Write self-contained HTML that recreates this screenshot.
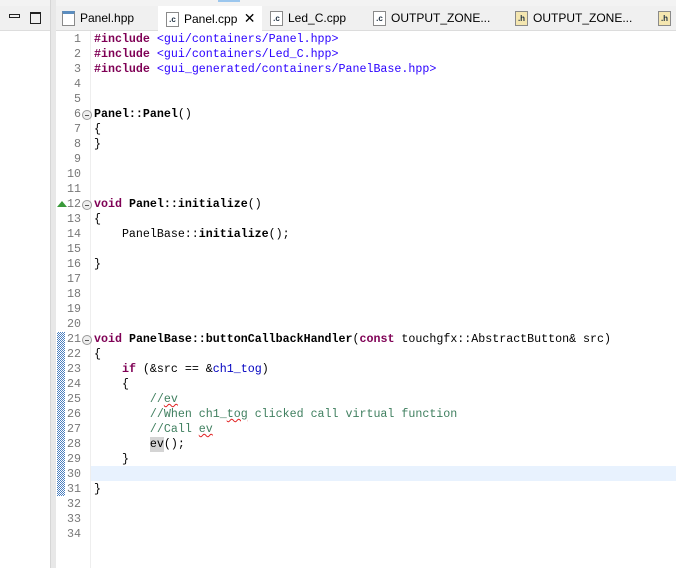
<!DOCTYPE html>
<html><head><style>
body{margin:0;width:676px;height:568px;overflow:hidden;background:#fff;font-family:"Liberation Sans",sans-serif;position:relative}
.a{position:absolute}
.code{font-family:"Liberation Mono",monospace;font-size:11.65px;white-space:pre;line-height:15px}
.ln{position:absolute;left:52px;width:29px;text-align:right;color:#787878;font-family:"Liberation Mono",monospace;font-size:11.65px;line-height:15px}
.cl{position:absolute;left:94px;color:#000}
.k{color:#7f0055;font-weight:bold}
.s{color:#2a00ff}
.c{color:#3f7f5f}
.b{font-weight:bold}
.tab{position:absolute;top:6px;height:24px;font-size:12px;line-height:24px;color:#000}
.ic{display:inline-block;width:11px;height:13px;border:1px solid #8a8a8a;background:#fff;font-size:8px;line-height:13px;text-align:center;vertical-align:middle;margin-right:5px;color:#234;font-weight:bold}
.fold{position:absolute;left:82px;width:8px;height:8px;border:1px solid #999;border-radius:50%;background:#eee}
.fold:after{content:"";position:absolute;left:2px;top:3.5px;width:4px;height:1px;background:#555}
.sq{text-decoration:underline wavy #e02020;text-decoration-thickness:1px}
</style></head><body>
<div class="a" style="left:0;top:0;width:676px;height:6px;background:#f3f3f3;border-bottom:1px solid #dcdcdc"></div>
<div class="a" style="left:218px;top:0;width:22px;height:2px;background:#9cc7ee"></div>
<div class="a" style="left:0;top:6px;width:50px;height:24px;background:#f0f0f0;border-bottom:1px solid #ddd"></div>
<div class="a" style="left:9px;top:14px;width:9px;height:2px;border:1px solid #222"></div>
<div class="a" style="left:30px;top:12px;width:9px;height:9px;border:1px solid #222;border-top-width:2px"></div>
<div class="a" style="left:50px;top:0;width:5px;height:568px;background:#e8e8e8;border-left:1px solid #d6d6d6"></div>
<div class="a" style="left:56px;top:6px;width:620px;height:24px;background:#f0f0f0;border-bottom:1px solid #dcdcdc"></div>
<div class="a" style="left:158px;top:6px;width:104px;height:25px;background:#fff"></div>
<div class="tab" style="left:62px"><span class="ic" style="border-top:3px solid #5b8dbf;height:11px"></span>Panel.hpp</div>
<div class="tab" style="left:166px"><span class="ic">.c</span>Panel.cpp <span style="margin-left:3px;font-size:14px">✕</span></div>
<div class="tab" style="left:270px"><span class="ic">.c</span>Led_C.cpp</div>
<div class="tab" style="left:373px"><span class="ic">.c</span>OUTPUT_ZONE...</div>
<div class="tab" style="left:515px"><span class="ic" style="background:#f4e6b0">.h</span>OUTPUT_ZONE...</div>
<div class="tab" style="left:658px"><span class="ic" style="background:#f4e6b0">.h</span></div>
<div class="a" style="left:90px;top:31px;width:1px;height:537px;background:#eee"></div>
<div class="a" style="left:91px;top:466px;width:585px;height:15px;background:#e8f2fe"></div>
<div class="a" style="left:57px;top:332px;width:8px;height:164px;background:repeating-conic-gradient(#4a7fc0 0 25%,#fff 0 50%) 0 0/2px 2px"></div>
<div class="a" style="left:57px;top:201px;width:0;height:0;border-left:5px solid transparent;border-right:5px solid transparent;border-bottom:6px solid #3a9a3a"></div>
<div class="fold" style="top:110px"></div>
<div class="fold" style="top:200px"></div>
<div class="fold" style="top:335px"></div>
<div class="a" style="left:150px;top:437px;width:14px;height:15px;background:#d4d4d4"></div>
<div class="code" style="position:absolute;left:0;top:1px;width:676px">
<div class="ln" style="top:31px">1</div><div class="cl" style="top:31px"><span class="k">#include</span> <span class="s">&lt;gui/containers/Panel.hpp&gt;</span></div>
<div class="ln" style="top:46px">2</div><div class="cl" style="top:46px"><span class="k">#include</span> <span class="s">&lt;gui/containers/Led_C.hpp&gt;</span></div>
<div class="ln" style="top:61px">3</div><div class="cl" style="top:61px"><span class="k">#include</span> <span class="s">&lt;gui_generated/containers/PanelBase.hpp&gt;</span></div>
<div class="ln" style="top:76px">4</div>
<div class="ln" style="top:91px">5</div>
<div class="ln" style="top:106px">6</div><div class="cl" style="top:106px"><span class="b">Panel::Panel</span>()</div>
<div class="ln" style="top:121px">7</div><div class="cl" style="top:121px">{</div>
<div class="ln" style="top:136px">8</div><div class="cl" style="top:136px">}</div>
<div class="ln" style="top:151px">9</div>
<div class="ln" style="top:166px">10</div>
<div class="ln" style="top:181px">11</div>
<div class="ln" style="top:196px">12</div><div class="cl" style="top:196px"><span class="k">void</span> <span class="b">Panel::initialize</span>()</div>
<div class="ln" style="top:211px">13</div><div class="cl" style="top:211px">{</div>
<div class="ln" style="top:226px">14</div><div class="cl" style="top:226px">    PanelBase::<span class="b">initialize</span>();</div>
<div class="ln" style="top:241px">15</div>
<div class="ln" style="top:256px">16</div><div class="cl" style="top:256px">}</div>
<div class="ln" style="top:271px">17</div>
<div class="ln" style="top:286px">18</div>
<div class="ln" style="top:301px">19</div>
<div class="ln" style="top:316px">20</div>
<div class="ln" style="top:331px">21</div><div class="cl" style="top:331px"><span class="k">void</span> <span class="b">PanelBase::buttonCallbackHandler</span>(<span class="k">const</span> touchgfx::AbstractButton&amp; src)</div>
<div class="ln" style="top:346px">22</div><div class="cl" style="top:346px">{</div>
<div class="ln" style="top:361px">23</div><div class="cl" style="top:361px">    <span class="k">if</span> (&amp;src == &amp;<span style="color:#0000c0">ch1_tog</span>)</div>
<div class="ln" style="top:376px">24</div><div class="cl" style="top:376px">    {</div>
<div class="ln" style="top:391px">25</div><div class="cl" style="top:391px">        <span class="c">//<span class="sq">ev</span></span></div>
<div class="ln" style="top:406px">26</div><div class="cl" style="top:406px">        <span class="c">//When ch1_<span class="sq">tog</span> clicked call virtual function</span></div>
<div class="ln" style="top:421px">27</div><div class="cl" style="top:421px">        <span class="c">//Call <span class="sq">ev</span></span></div>
<div class="ln" style="top:436px">28</div><div class="cl" style="top:436px">        ev();</div>
<div class="ln" style="top:451px">29</div><div class="cl" style="top:451px">    }</div>
<div class="ln" style="top:466px">30</div>
<div class="ln" style="top:481px">31</div><div class="cl" style="top:481px">}</div>
<div class="ln" style="top:496px">32</div>
<div class="ln" style="top:511px">33</div>
<div class="ln" style="top:526px">34</div>
</div>
</body></html>
